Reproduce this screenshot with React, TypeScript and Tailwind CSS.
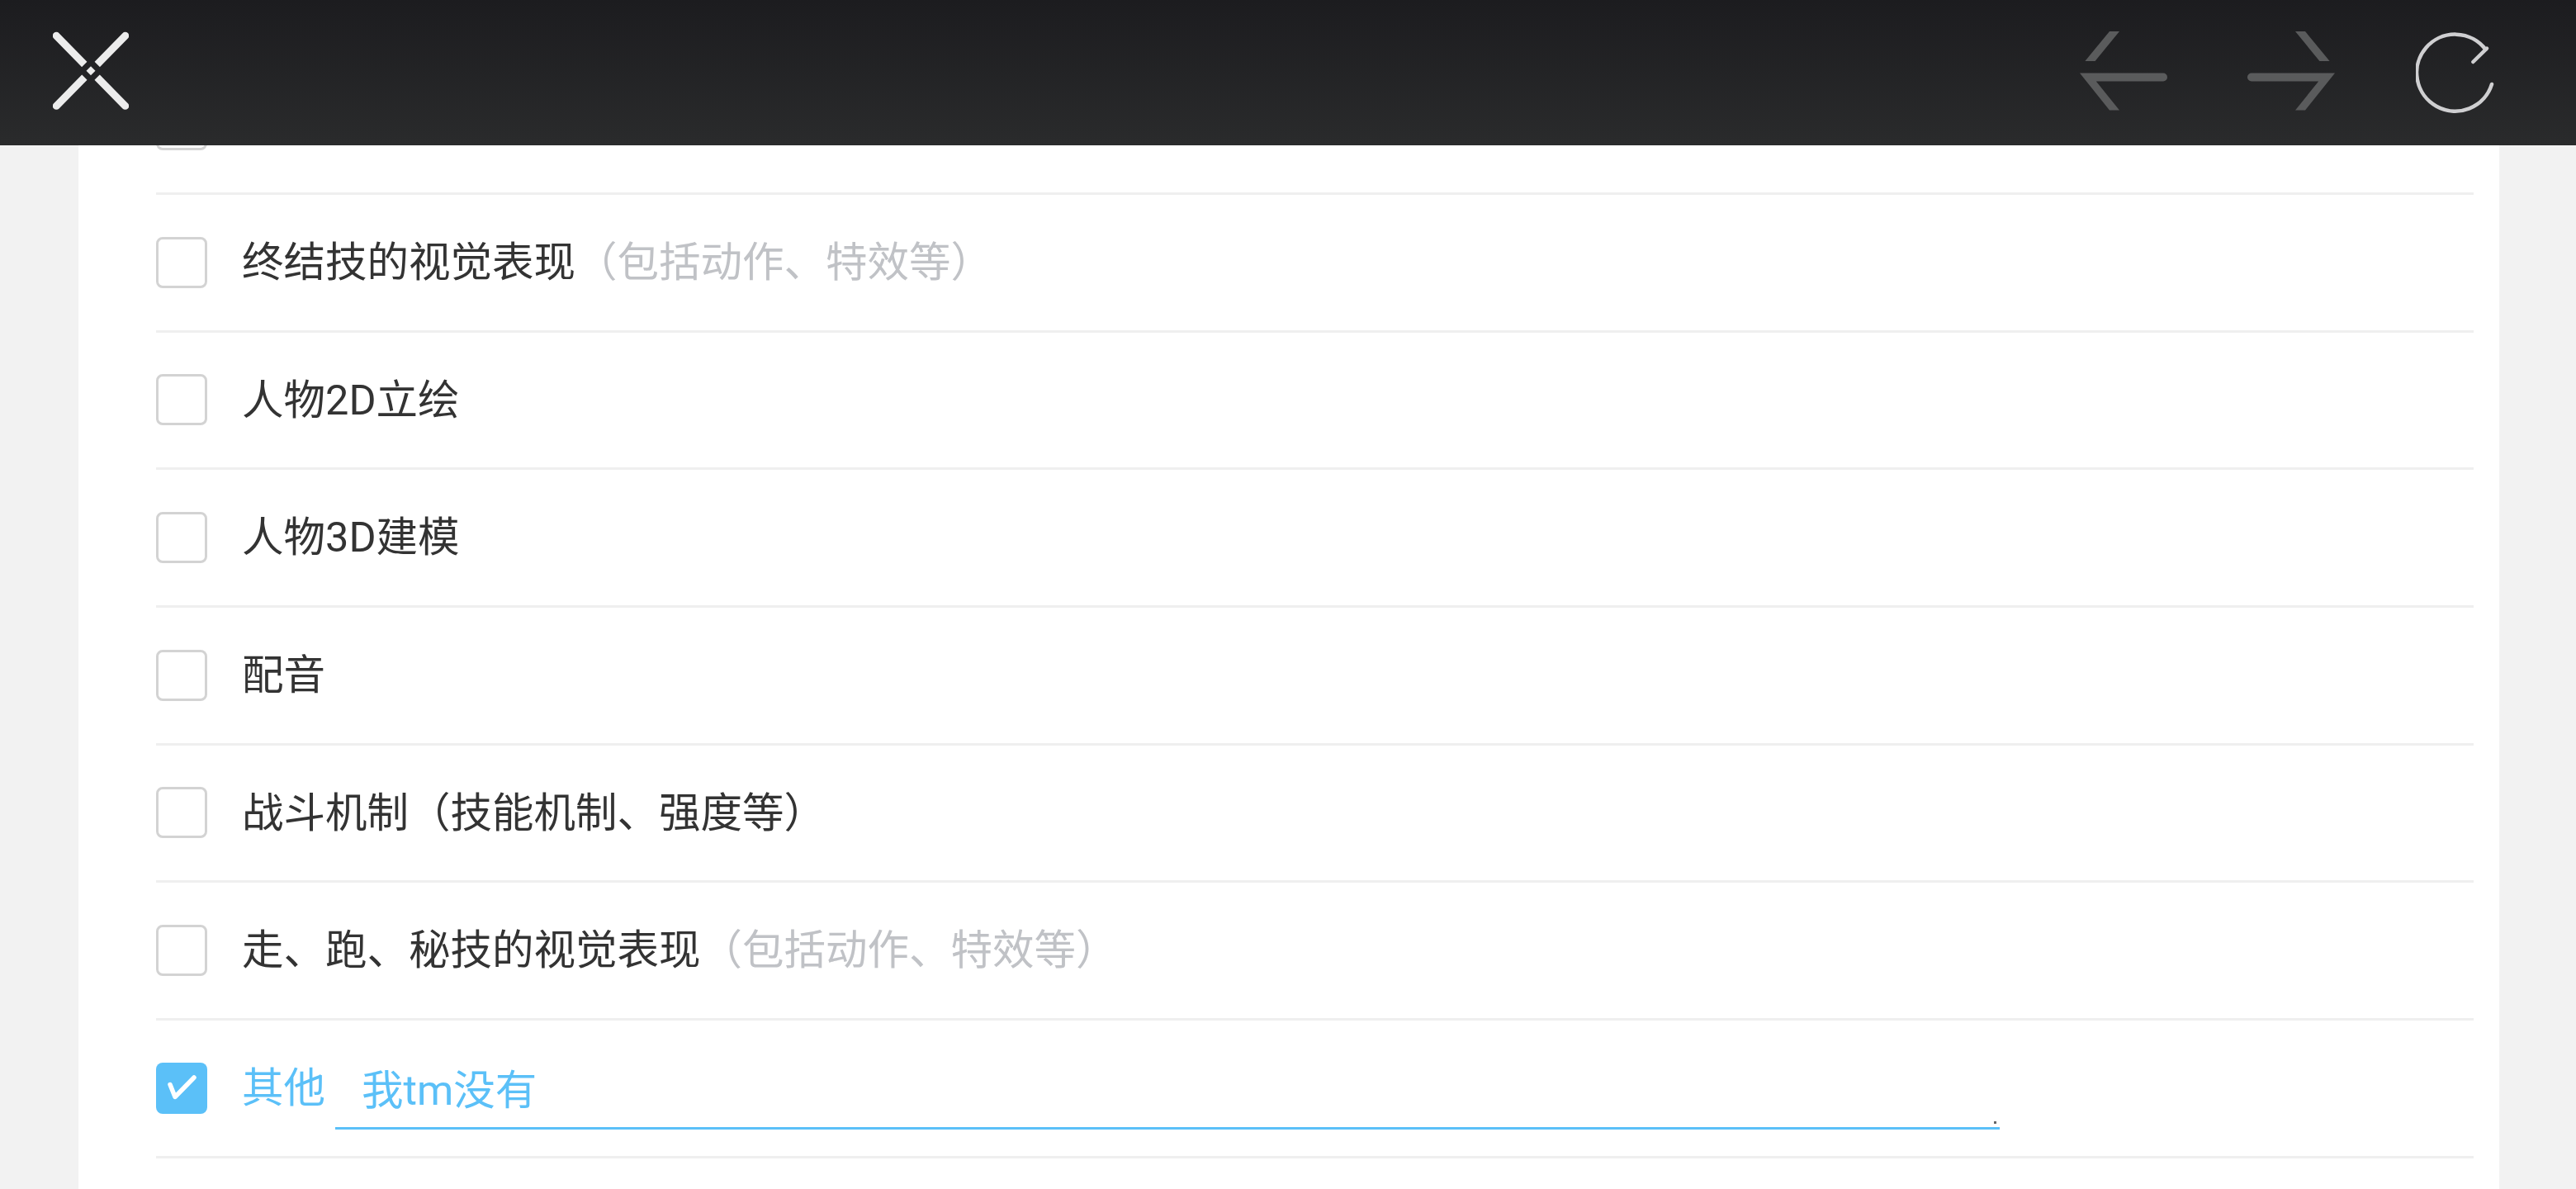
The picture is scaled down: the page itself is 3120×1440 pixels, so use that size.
import React from "react";

const BLUE = "#5bc0f8";

function CloseIcon() {
  return (
    <svg width="92" height="176" viewBox="0 -39 92 176" className="shrink-0">
      <defs>
        <mask id="xgap">
          <rect x="-10" y="-50" width="120" height="200" fill="white" />
          <polygon points="46,31.3 61.5,46.8 46,62.3 30.5,46.8" fill="black" />
        </mask>
      </defs>
      <g mask="url(#xgap)" stroke="#ececec" strokeWidth="9" strokeLinecap="round">
        <line x1="4.3" y1="4.3" x2="87.7" y2="89.3" />
        <line x1="87.7" y1="4.3" x2="4.3" y2="89.3" />
      </g>
      <polygon points="46,41.3 51.5,46.8 46,52.3 40.5,46.8" fill="#ececec" />
    </svg>
  );
}

function ArrowShape() {
  return (
    <>
      <polygon points="36,0 48,0 18.6,36 6.4,36" />
      <path d="M0 50.5 L101 50.5 A5 5 0 0 1 101 60.5 L19.8 60.5 L48 95.5 L36 95.5 Z" />
    </>
  );
}

function BackIcon() {
  return (
    <svg width="107" height="176" viewBox="0 -38 107 176" className="shrink-0" fill="#5a5b5c">
      <ArrowShape />
    </svg>
  );
}

function ForwardIcon() {
  return (
    <svg width="107" height="176" viewBox="0 -38 107 176" className="shrink-0" fill="#5a5b5c">
      <g transform="translate(107 0) scale(-1 1)">
        <ArrowShape />
      </g>
    </svg>
  );
}

function RefreshIcon() {
  return (
    <svg width="96" height="176" viewBox="0 -40 96 176" className="shrink-0" fill="none" stroke="#cfcfd1" strokeWidth="4.5" strokeLinecap="round">
      <path d="M84.5 19.8 A46.5 46.5 0 1 0 92 62" />
      <line x1="86" y1="18.6" x2="69.3" y2="35" />
    </svg>
  );
}

function Box({ checked = false }: { checked?: boolean }) {
  if (checked) {
    return (
      <span className="flex h-[62px] w-[62px] shrink-0 items-center justify-center rounded-[8px] bg-[#5bc0f8]">
        <svg width="62" height="62" viewBox="0 0 62 62" fill="none" stroke="white" strokeWidth="5.5" strokeLinecap="round" strokeLinejoin="round">
          <path d="M17 26.5 L23 41.5 L46 18" />
        </svg>
      </span>
    );
  }
  return <span className="h-[62px] w-[62px] shrink-0 rounded-[8px] border-[3px] border-[#d3d3d3]" />;
}

function Row({ children }: { children?: React.ReactNode }) {
  return (
    <div className="flex h-[166.67px] items-center border-b-[3px] border-[#efefef]">
      {children}
    </div>
  );
}

function Option({ label, hint }: { label: string; hint?: string }) {
  return (
    <Row>
      <Box />
      <span className="ml-[42px] whitespace-nowrap text-[50.5px] text-[#333333]">
        {label}
        {hint && <span className="text-[#c0c2c6]">{hint}</span>}
      </span>
    </Row>
  );
}

export default function App() {
  return (
    <div className="relative h-[1440px] w-[3120px] overflow-hidden bg-[#f2f2f2] font-['Roboto','Noto_Sans_CJK_SC',sans-serif]">
      <header className="absolute inset-x-0 top-0 z-10 flex h-[176px] items-stretch bg-gradient-to-b from-[#1c1c1f] to-[#2a2b2c] pl-[64px] pr-[98px]">
        <CloseIcon />
        <div className="flex-1" />
        <BackIcon />
        <div className="w-[95px] shrink-0" />
        <ForwardIcon />
        <div className="w-[98px] shrink-0" />
        <RefreshIcon />
      </header>

      <main className="ml-[95px] mr-[93px] h-full bg-white pl-[94px] pr-[31px] pt-[69.33px]">
        <Row>
          <Box />
        </Row>
        <Option label="终结技的视觉表现" hint="（包括动作、特效等）" />
        <Option label="人物2D立绘" />
        <Option label="人物3D建模" />
        <Option label="配音" />
        <Option label="战斗机制（技能机制、强度等）" />
        <Option label="走、跑、秘技的视觉表现" hint="（包括动作、特效等）" />
        <Row>
          <Box checked />
          <span className="ml-[42px] whitespace-nowrap text-[50.5px] text-[#5bc0f8]">其他</span>
          <div className="relative ml-[12px] w-[2016px] shrink-0">
            <input
              readOnly
              value="我tm没有"
              className="block h-[100px] w-full border-b-[3px] border-[#5bc0f8] bg-transparent pl-[32px] text-[50.5px] text-[#5bc0f8] outline-none"
              style={{ color: BLUE }}
            />
            <span className="absolute bottom-[7px] right-[4px] h-[3px] w-[3px] bg-[#666666]" />
          </div>
        </Row>
      </main>
    </div>
  );
}
